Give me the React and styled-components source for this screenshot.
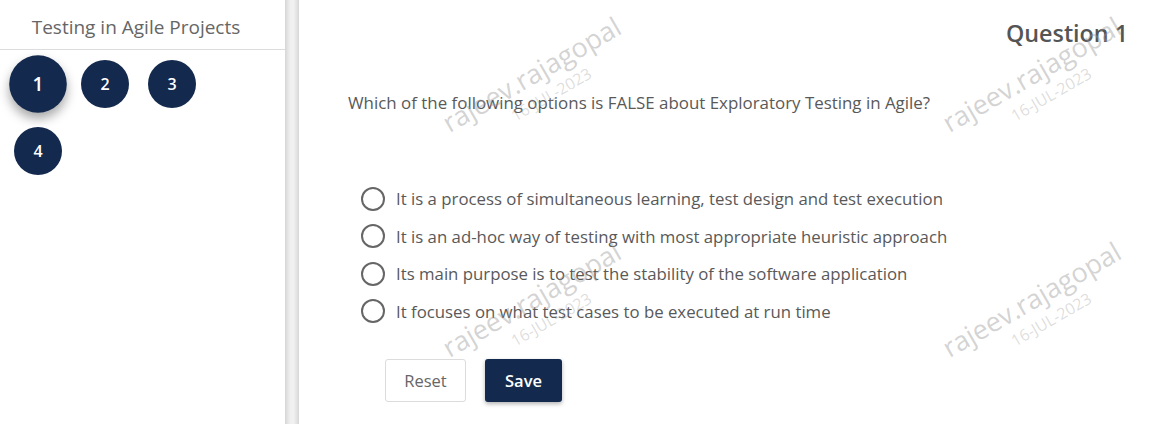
import styled, { createGlobalStyle } from "styled-components";
import { useState } from "react";

const GlobalStyle = createGlobalStyle`
  html, body {
    margin: 0;
    padding: 0;
    background: #fff;
    font-family: "Open Sans", "Liberation Sans", sans-serif;
  }
  * { box-sizing: border-box; }
`;

const navy = "#13294d";

const options = [
  "It is a process of simultaneous learning, test design and test execution",
  "It is an ad-hoc way of testing with most appropriate heuristic approach",
  "Its main purpose is to test the stability of the software application",
  "It focuses on what test cases to be executed at run time",
];

const marks = [
  { x: 238, y: 84 },
  { x: 738, y: 84 },
  { x: 238, y: 309 },
  { x: 738, y: 309 },
];

const App = () => {
  const [current, setCurrent] = useState(1);
  const [picked, setPicked] = useState(null);

  return (
    <>
      <GlobalStyle />
      <Page>
        <Sidebar>
          <SideTitle>Testing in Agile Projects</SideTitle>
          <Bubbles>
            {[1, 2, 3, 4].map((n) => (
              <Bubble key={n} $active={n === current} onClick={() => setCurrent(n)}>
                {n}
              </Bubble>
            ))}
          </Bubbles>
        </Sidebar>
        <Divider />
        <Main>
          <QHead>Question {current}</QHead>
          <QText>Which of the following options is FALSE about Exploratory Testing in Agile?</QText>
          <Options>
            {options.map((o, i) => (
              <Option key={i} onClick={() => setPicked(i)}>
                <Radio $on={picked === i} />
                {o}
              </Option>
            ))}
          </Options>
          <Buttons>
            <ResetBtn onClick={() => setPicked(null)}>Reset</ResetBtn>
            <SaveBtn>Save</SaveBtn>
          </Buttons>
          {marks.map((m, i) => (
            <Watermark key={i} style={{ left: m.x, top: m.y }}>
              <MarkName>rajeev.rajagopal</MarkName>
              <MarkDate>16-JUL-2023</MarkDate>
            </Watermark>
          ))}
        </Main>
      </Page>
    </>
  );
};

const Page = styled.div`
  display: flex;
  height: 100vh;
  overflow: hidden;
`;

const Sidebar = styled.div`
  width: 285px;
  flex-shrink: 0;
`;

const SideTitle = styled.div`
  height: 50px;
  border-bottom: 1px solid #dcdcdc;
  text-align: center;
  font-size: 19px;
  line-height: 26px;
  padding: 14px 13px 0 0;
  color: #666;
`;

const Bubbles = styled.div`
  display: grid;
  grid-template-columns: repeat(3, 48px);
  gap: 19px;
  padding: 10px 0 0 14px;
`;

const Bubble = styled.div`
  width: 48px;
  height: 48px;
  border-radius: 50%;
  background: ${navy};
  color: #fff;
  display: flex;
  align-items: center;
  justify-content: center;
  font-size: 16px;
  font-weight: 600;
  cursor: pointer;
  transform: ${(p) => (p.$active ? "scale(1.2)" : "none")};
  box-shadow: ${(p) => (p.$active ? "0 5px 9px rgba(0,0,0,0.35)" : "none")};
`;

const Divider = styled.div`
  width: 14px;
  flex-shrink: 0;
  background: linear-gradient(to right, #d6d6d6, #efefef 35%, #f2f2f2 60%, #d8d8d8);
`;

const Main = styled.div`
  flex: 1;
  position: relative;
  padding: 18px 37px 0 49px;
`;

const QHead = styled.div`
  text-align: right;
  font-size: 23.3px;
  line-height: 30px;
  font-weight: 600;
  color: #555;
`;

const QText = styled.div`
  margin-top: 43px;
  font-size: 16.9px;
  line-height: 24px;
  color: #595959;
`;

const Options = styled.div`
  margin-top: 65px;
  padding-left: 13px;
  display: flex;
  flex-direction: column;
`;

const Option = styled.label`
  display: flex;
  align-items: center;
  gap: 11px;
  height: 37.5px;
  font-size: 16.8px;
  color: #595959;
  cursor: pointer;
`;

const Radio = styled.span`
  width: 24px;
  height: 24px;
  border-radius: 50%;
  border: 2px solid #666;
  flex-shrink: 0;
  box-shadow: ${(p) => (p.$on ? `inset 0 0 0 4px #fff, inset 0 0 0 12px ${navy}` : "none")};
`;

const Buttons = styled.div`
  display: flex;
  gap: 19px;
  margin-top: 29px;
  padding-left: 37px;
`;

const ResetBtn = styled.button`
  width: 81px;
  height: 43px;
  border: 1px solid #dcdcdc;
  border-radius: 3px;
  background: #fff;
  color: #666;
  font-family: inherit;
  font-size: 16.5px;
  cursor: pointer;
`;

const SaveBtn = styled.button`
  width: 77px;
  height: 43px;
  border: none;
  border-radius: 3px;
  background: ${navy};
  color: #fff;
  font-family: inherit;
  font-size: 16.5px;
  font-weight: 600;
  box-shadow: 0 2px 4px rgba(0,0,0,0.3);
  cursor: pointer;
`;

const Watermark = styled.div`
  position: absolute;
  transform: translate(-50%, -50%) rotate(-30deg);
  display: flex;
  flex-direction: column;
  align-items: center;
  pointer-events: none;
  white-space: nowrap;
`;

const MarkName = styled.div`
  font-size: 27px;
  line-height: 30px;
  color: rgba(150, 150, 150, 0.42);
`;

const MarkDate = styled.div`
  font-size: 16px;
  line-height: 20px;
  margin-top: 2px;
  color: rgba(150, 150, 150, 0.32);
  margin-left: 14px;
`;

export default App;
